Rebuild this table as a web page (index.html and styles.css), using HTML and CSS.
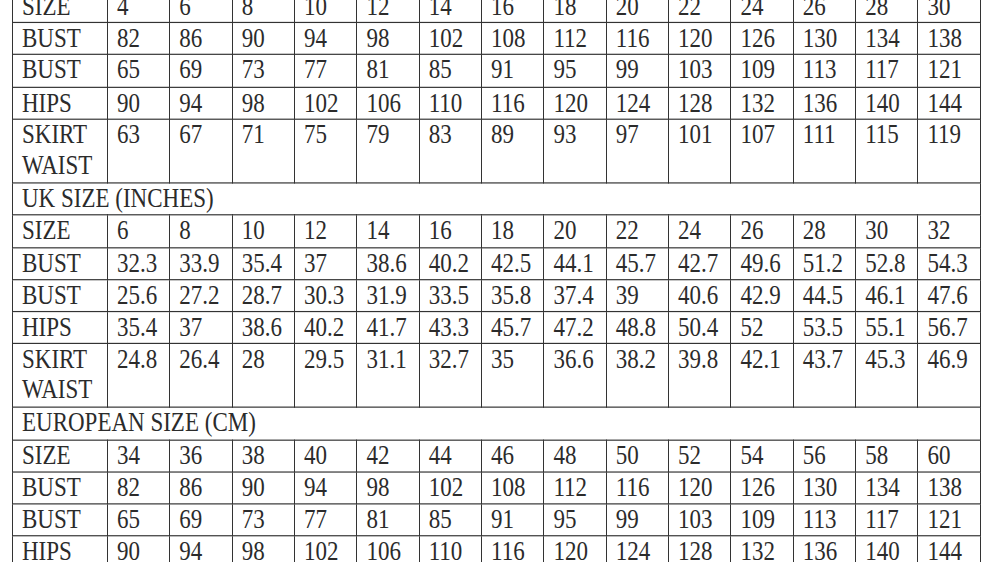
FILE: index.html
```html
<!DOCTYPE html>
<html>
<head>
<meta charset="utf-8">
<link rel="stylesheet" href="styles.css">
</head>
<body>
<table class="chart">
<colgroup><col class="label-col"><col span="14"></colgroup>
<tr><td>SIZE</td><td>4</td><td>6</td><td>8</td><td>10</td><td>12</td><td>14</td><td>16</td><td>18</td><td>20</td><td>22</td><td>24</td><td>26</td><td>28</td><td>30</td></tr>
<tr><td>BUST</td><td>82</td><td>86</td><td>90</td><td>94</td><td>98</td><td>102</td><td>108</td><td>112</td><td>116</td><td>120</td><td>126</td><td>130</td><td>134</td><td>138</td></tr>
<tr><td>BUST</td><td>65</td><td>69</td><td>73</td><td>77</td><td>81</td><td>85</td><td>91</td><td>95</td><td>99</td><td>103</td><td>109</td><td>113</td><td>117</td><td>121</td></tr>
<tr><td>HIPS</td><td>90</td><td>94</td><td>98</td><td>102</td><td>106</td><td>110</td><td>116</td><td>120</td><td>124</td><td>128</td><td>132</td><td>136</td><td>140</td><td>144</td></tr>
<tr class="tall"><td>SKIRT<br>WAIST</td><td>63</td><td>67</td><td>71</td><td>75</td><td>79</td><td>83</td><td>89</td><td>93</td><td>97</td><td>101</td><td>107</td><td>111</td><td>115</td><td>119</td></tr>
<tr><td colspan="15">UK SIZE (INCHES)</td></tr>
<tr><td>SIZE</td><td>6</td><td>8</td><td>10</td><td>12</td><td>14</td><td>16</td><td>18</td><td>20</td><td>22</td><td>24</td><td>26</td><td>28</td><td>30</td><td>32</td></tr>
<tr><td>BUST</td><td>32.3</td><td>33.9</td><td>35.4</td><td>37</td><td>38.6</td><td>40.2</td><td>42.5</td><td>44.1</td><td>45.7</td><td>42.7</td><td>49.6</td><td>51.2</td><td>52.8</td><td>54.3</td></tr>
<tr><td>BUST</td><td>25.6</td><td>27.2</td><td>28.7</td><td>30.3</td><td>31.9</td><td>33.5</td><td>35.8</td><td>37.4</td><td>39</td><td>40.6</td><td>42.9</td><td>44.5</td><td>46.1</td><td>47.6</td></tr>
<tr><td>HIPS</td><td>35.4</td><td>37</td><td>38.6</td><td>40.2</td><td>41.7</td><td>43.3</td><td>45.7</td><td>47.2</td><td>48.8</td><td>50.4</td><td>52</td><td>53.5</td><td>55.1</td><td>56.7</td></tr>
<tr class="tall"><td>SKIRT<br>WAIST</td><td>24.8</td><td>26.4</td><td>28</td><td>29.5</td><td>31.1</td><td>32.7</td><td>35</td><td>36.6</td><td>38.2</td><td>39.8</td><td>42.1</td><td>43.7</td><td>45.3</td><td>46.9</td></tr>
<tr><td colspan="15">EUROPEAN SIZE (CM)</td></tr>
<tr><td>SIZE</td><td>34</td><td>36</td><td>38</td><td>40</td><td>42</td><td>44</td><td>46</td><td>48</td><td>50</td><td>52</td><td>54</td><td>56</td><td>58</td><td>60</td></tr>
<tr><td>BUST</td><td>82</td><td>86</td><td>90</td><td>94</td><td>98</td><td>102</td><td>108</td><td>112</td><td>116</td><td>120</td><td>126</td><td>130</td><td>134</td><td>138</td></tr>
<tr><td>BUST</td><td>65</td><td>69</td><td>73</td><td>77</td><td>81</td><td>85</td><td>91</td><td>95</td><td>99</td><td>103</td><td>109</td><td>113</td><td>117</td><td>121</td></tr>
<tr><td>HIPS</td><td>90</td><td>94</td><td>98</td><td>102</td><td>106</td><td>110</td><td>116</td><td>120</td><td>124</td><td>128</td><td>132</td><td>136</td><td>140</td><td>144</td></tr>
</table>
</body>
</html>
```
FILE: styles.css
```css
html {
  overflow: hidden;
  background: #fff;
  height: 100%;
}
body {
  margin: 0;
  padding: 0;
  background: #fff;
  min-height: 600px;
}
.chart {
  border-collapse: collapse;
  table-layout: fixed;
  width: 969px;
  margin: -10px 0 0 12px;
  transform: scaleY(1.18);
  transform-origin: top left;
  font-family: "Liberation Serif", "Times New Roman", serif;
  font-size: 23px;
  line-height: 26px;
  color: #2b2b2b;
}
.label-col {
  width: 95px;
}
.chart tr {
  height: 27.2px;
}
.chart tr.tall {
  height: 54.4px;
}
.chart td {
  border: 1px solid #333;
  padding: 0 0 0 9px;
  vertical-align: top;
  white-space: nowrap;
  overflow: hidden;
}
```
